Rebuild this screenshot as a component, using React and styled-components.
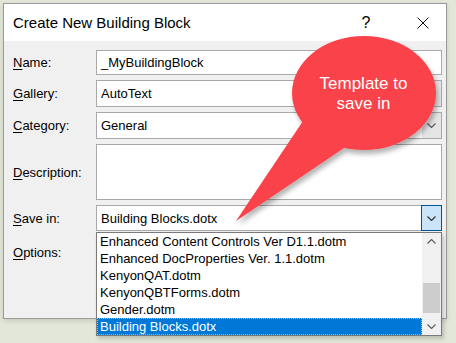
import React from "react";
import styled, { createGlobalStyle } from "styled-components";

const GlobalStyle = createGlobalStyle`
  html, body {
    margin: 0;
    padding: 0;
    background: #e3e7da;
  }
  body {
    font-family: "Liberation Sans", Arial, sans-serif;
    color: #000;
  }
`;

const Page = styled.div`
  position: relative;
  width: 456px;
  height: 343px;
  padding: 3px 0 0 3px;
  box-sizing: border-box;
  overflow: hidden;
`;

const Dialog = styled.div`
  width: 444px;
  height: 316px;
  box-sizing: border-box;
  border: 1px solid #9a9a9a;
  background: #f0f0f0;
  box-shadow: 0 2px 5px rgba(0, 0, 0, 0.12);
  display: flex;
  flex-direction: column;
`;

const TitleBar = styled.div`
  height: 37px;
  flex: none;
  background: #fff;
  display: flex;
  align-items: center;
  padding-left: 9px;
`;

const Title = styled.div`
  flex: 1;
  font-size: 15px;
`;

const TitleButton = styled.div`
  width: 46px;
  height: 100%;
  display: flex;
  align-items: center;
  justify-content: center;
  font-size: 16px;
  margin-right: ${(p) => p.$gap || 0}px;
`;

const Form = styled.div`
  display: grid;
  grid-template-columns: 83px 1fr;
  grid-template-rows: 25px 27px 27px 56px 26px 30px;
  row-gap: 5px;
  align-items: center;
  padding: 9px 4px 0 9px;
`;

const FieldLabel = styled.div`
  font-size: 13px;
  align-self: ${(p) => (p.$top ? "start" : "center")};
  padding-top: ${(p) => (p.$top ? 9 : 0)}px;
  u {
    text-decoration-thickness: 1px;
    text-underline-offset: 2px;
  }
`;

const Field = styled.div`
  position: relative;
  height: 100%;
  box-sizing: border-box;
  border: 1px solid #a9a9a9;
  background: #fff;
  display: flex;
  align-items: center;
  font-size: 13px;
`;

const FieldValue = styled.div`
  flex: 1;
  padding-left: 4px;
  white-space: nowrap;
`;

const DropButton = styled.div`
  align-self: stretch;
  box-sizing: border-box;
  width: ${(p) => (p.$open ? 21 : 19)}px;
  margin: ${(p) => (p.$open ? "-1px -1px -1px 0" : "0")};
  background: ${(p) => (p.$open ? "#cce4f7" : "#e5e5e5")};
  border: 1px solid ${(p) => (p.$open ? "#005499" : "#e5e5e5")};
  display: flex;
  align-items: center;
  justify-content: center;
`;

const DropList = styled.div`
  position: absolute;
  left: -1px;
  right: -1px;
  top: 26px;
  height: 104px;
  box-sizing: border-box;
  border: 1px solid #7a7a7a;
  background: #fff;
  box-shadow: 2px 3px 4px rgba(0, 0, 0, 0.18);
  display: flex;
  z-index: 2;
`;

const Items = styled.div`
  flex: 1;
  display: flex;
  flex-direction: column;
`;

const Item = styled.div`
  height: 17px;
  line-height: 17px;
  padding-left: 3px;
  font-size: 13px;
  white-space: nowrap;
  box-sizing: border-box;
  background: ${(p) => (p.$selected ? "#0078d7" : "transparent")};
  color: ${(p) => (p.$selected ? "#fff" : "#000")};
  outline: ${(p) => (p.$selected ? "1px dotted #e8b04a" : "none")};
  outline-offset: -1px;
`;

const ScrollBar = styled.div`
  width: 19px;
  background: #f0f0f0;
  display: flex;
  flex-direction: column;
`;

const ScrollArrow = styled.div`
  height: 17px;
  flex: none;
  display: flex;
  align-items: center;
  justify-content: center;
`;

const Track = styled.div`
  flex: 1;
  display: flex;
  flex-direction: column;
  padding-top: 33px;
`;

const Thumb = styled.div`
  height: 30px;
  margin: 0 1px;
  background: #cdcdcd;
`;

const Callout = styled.div`
  position: absolute;
  inset: 0;
  pointer-events: none;
  z-index: 5;
`;

const CalloutText = styled.div`
  position: absolute;
  left: 300px;
  top: 74px;
  width: 127px;
  text-align: center;
  font-family: "Liberation Sans", Arial, sans-serif;
  font-size: 17px;
  line-height: 20px;
  color: #fff;
`;

const Chevron = ({ up, color = "#5a5a5a" }) => (
  <svg width="9" height="5" viewBox="0 0 9 5">
    <polyline
      points={up ? "0.5,4.5 4.5,0.5 8.5,4.5" : "0.5,0.5 4.5,4.5 8.5,0.5"}
      fill="none"
      stroke={color}
      strokeWidth="1.2"
    />
  </svg>
);

const templates = [
  "Enhanced Content Controls Ver D1.1.dotm",
  "Enhanced DocProperties Ver. 1.1.dotm",
  "KenyonQAT.dotm",
  "KenyonQBTForms.dotm",
  "Gender.dotm",
  "Building Blocks.dotx",
];

// first letter is the access key, shown underlined
const Label = ({ text, top }) => (
  <FieldLabel $top={top}>
    <u>{text[0]}</u>
    {text.slice(1)}
  </FieldLabel>
);

export default function App() {
  return (
    <>
      <GlobalStyle />
      <Page>
        <Dialog>
          <TitleBar>
            <Title>Create New Building Block</Title>
            <TitleButton $gap={11}>?</TitleButton>
            <TitleButton>
              <svg width="12" height="12" viewBox="0 0 12 12">
                <path d="M0.5 0.5 L11.5 11.5 M11.5 0.5 L0.5 11.5" stroke="#111" strokeWidth="1" />
              </svg>
            </TitleButton>
          </TitleBar>
          <Form>
            <Label text="Name:" />
            <Field>
              <FieldValue>_MyBuildingBlock</FieldValue>
            </Field>

            <Label text="Gallery:" />
            <Field>
              <FieldValue>AutoText</FieldValue>
              <DropButton>
                <Chevron />
              </DropButton>
            </Field>

            <Label text="Category:" />
            <Field>
              <FieldValue>General</FieldValue>
              <DropButton>
                <Chevron />
              </DropButton>
            </Field>

            <Label text="Description:" />
            <Field />

            <Label text="Save in:" />
            <Field>
              <FieldValue>Building Blocks.dotx</FieldValue>
              <DropButton $open>
                <Chevron color="#333" />
              </DropButton>
              <DropList>
                <Items>
                  {templates.map((t, i) => (
                    <Item key={t} $selected={i === templates.length - 1}>
                      {t}
                    </Item>
                  ))}
                </Items>
                <ScrollBar>
                  <ScrollArrow>
                    <Chevron up color="#606060" />
                  </ScrollArrow>
                  <Track>
                    <Thumb />
                  </Track>
                  <ScrollArrow>
                    <Chevron color="#606060" />
                  </ScrollArrow>
                </ScrollBar>
              </DropList>
            </Field>

            <Label text="Options:" top />
            <div />
          </Form>
        </Dialog>

        <Callout>
          <svg width="456" height="343" viewBox="0 0 456 343">
            <defs>
              <filter id="shadow" x="-20%" y="-20%" width="140%" height="140%">
                <feDropShadow dx="2" dy="4" stdDeviation="2.5" floodColor="#000" floodOpacity="0.3" />
              </filter>
            </defs>
            <g fill="#f9424a" filter="url(#shadow)">
              <ellipse cx="364" cy="93" rx="72" ry="57" />
              <polygon points="305,118 236,221 347,146" />
            </g>
          </svg>
          <CalloutText>
            Template to
            <br />
            save in
          </CalloutText>
        </Callout>
      </Page>
    </>
  );
}
